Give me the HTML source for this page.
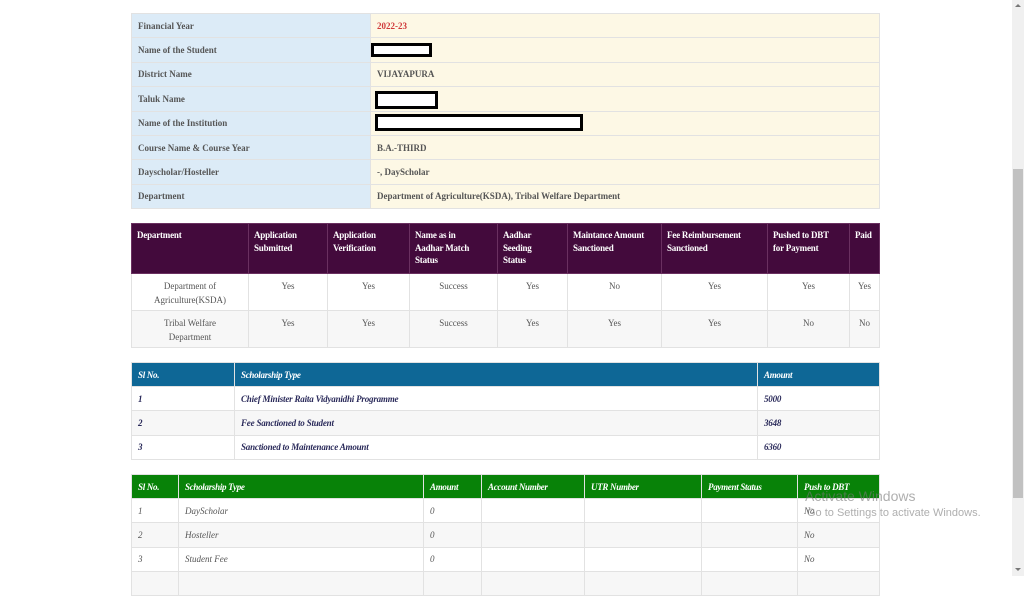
<!DOCTYPE html>
<html><head><meta charset="utf-8"><style>
*{margin:0;padding:0;box-sizing:border-box}
body{width:1024px;height:576px;overflow:hidden;background:#fff;position:relative;font-family:"Liberation Serif",serif}
table{position:absolute;left:131px;width:749px;border-collapse:collapse;table-layout:fixed}
td,th{border:1px solid #e2e2e2;text-align:left;vertical-align:middle;padding:0 6px}
#t1 td{height:24.4px;font-size:9px;font-weight:bold;color:#555}
#t1 td.l{background:#dcebf7}
#t1 td.v{background:#fdf8e5}
#t2 th{background:#430a3c;color:#fff;font-size:9px;font-weight:bold;vertical-align:top;padding:5px 14px 0 5px;height:50px;line-height:12.5px;border-color:#6a3060;letter-spacing:-0.2px}
#t2 td{height:37px;font-size:9px;color:#555;text-align:center;vertical-align:top;padding:6px 18px 0;line-height:13.5px}
#t2 tr.g td{background:#f7f7f7}
#t3 th,#t4 th{color:#fff;font-size:9px;font-style:italic;font-weight:bold;height:24px;padding-left:6px;letter-spacing:-0.3px}
#t3 th{background:#0e6796}
#t4 th{background:#088208}
#t3 td{height:24.3px;font-size:9px;font-style:italic;font-weight:bold;color:#2a2a5a;letter-spacing:-0.2px}
#t4 td{height:24.3px;font-size:9px;font-style:italic;color:#555}
tr.g td{background:#f7f7f7}
.box{position:absolute;border:3px solid #000;background:#fff}
.sb{position:absolute;left:1012px;top:0;width:12px;height:576px;background:#f0f0f0}
.th{position:absolute;left:1013px;top:169px;width:10px;height:329px;background:#c1c1c1}
.wm{position:absolute;color:rgba(120,120,120,.6);font-family:"Liberation Sans",sans-serif}
</style></head><body>
<table id="t1" style="top:13px">
<colgroup><col style="width:239px"><col></colgroup>
<tr><td class="l">Financial Year</td><td class="v" style="color:#d0393a">2022-23</td></tr>
<tr><td class="l">Name of the Student</td><td class="v"></td></tr>
<tr><td class="l">District Name</td><td class="v">VIJAYAPURA</td></tr>
<tr><td class="l">Taluk Name</td><td class="v"></td></tr>
<tr><td class="l">Name of the Institution</td><td class="v"></td></tr>
<tr><td class="l">Course Name &amp; Course Year</td><td class="v">B.A.-THIRD</td></tr>
<tr><td class="l">Dayscholar/Hosteller</td><td class="v">-, DayScholar</td></tr>
<tr><td class="l">Department</td><td class="v">Department of Agriculture(KSDA), Tribal Welfare Department</td></tr>
</table>
<div class="box" style="left:371px;top:43px;width:61px;height:14px"></div>
<div class="box" style="left:375px;top:91px;width:63px;height:18px"></div>
<div class="box" style="left:375px;top:114px;width:208px;height:17px"></div>

<table id="t2" style="top:223px">
<colgroup><col style="width:117px"><col style="width:79px"><col style="width:82px"><col style="width:88px"><col style="width:70px"><col style="width:94px"><col style="width:106px"><col style="width:82px"><col></colgroup>
<tr><th>Department</th><th>Application Submitted</th><th>Application Verification</th><th>Name as in Aadhar Match Status</th><th>Aadhar Seeding Status</th><th>Maintance Amount Sanctioned</th><th>Fee Reimbursement Sanctioned</th><th>Pushed to DBT for Payment</th><th style="padding-right:2px">Paid</th></tr>
<tr><td>Department of Agriculture(KSDA)</td><td>Yes</td><td>Yes</td><td>Success</td><td>Yes</td><td>No</td><td>Yes</td><td>Yes</td><td style="padding:6px 0 0">Yes</td></tr>
<tr class="g"><td>Tribal Welfare Department</td><td>Yes</td><td>Yes</td><td>Success</td><td>Yes</td><td>Yes</td><td>Yes</td><td>No</td><td style="padding:6px 0 0">No</td></tr>
</table>

<table id="t3" style="top:362px">
<colgroup><col style="width:103px"><col style="width:523px"><col></colgroup>
<tr><th>Sl No.</th><th>Scholarship Type</th><th>Amount</th></tr>
<tr><td>1</td><td>Chief Minister Raita Vidyanidhi Programme</td><td>5000</td></tr>
<tr class="g"><td>2</td><td>Fee Sanctioned to Student</td><td>3648</td></tr>
<tr><td>3</td><td>Sanctioned to Maintenance Amount</td><td>6360</td></tr>
</table>

<table id="t4" style="top:474px">
<colgroup><col style="width:47px"><col style="width:245px"><col style="width:58px"><col style="width:103px"><col style="width:117px"><col style="width:96px"><col></colgroup>
<tr><th>Sl No.</th><th>Scholarship Type</th><th>Amount</th><th>Account Number</th><th>UTR Number</th><th>Payment Status</th><th>Push to DBT</th></tr>
<tr><td>1</td><td>DayScholar</td><td>0</td><td></td><td></td><td></td><td>No</td></tr>
<tr class="g"><td>2</td><td>Hosteller</td><td>0</td><td></td><td></td><td></td><td>No</td></tr>
<tr><td>3</td><td>Student Fee</td><td>0</td><td></td><td></td><td></td><td>No</td></tr>
<tr class="g"><td></td><td></td><td></td><td></td><td></td><td></td><td></td></tr>
</table>

<div class="wm" style="left:805px;top:488px;font-size:14px">Activate Windows</div>
<div class="wm" style="left:807px;top:507px;font-size:11px">Go to Settings to activate Windows.</div>
<div class="sb"></div><div class="th"></div>
<div style="position:absolute;left:1015px;top:4px;width:0;height:0;border-left:3px solid transparent;border-right:3px solid transparent;border-bottom:3px solid #777"></div>
<div style="position:absolute;left:1015px;top:568px;width:0;height:0;border-left:3px solid transparent;border-right:3px solid transparent;border-top:3px solid #777"></div>
</body></html>
